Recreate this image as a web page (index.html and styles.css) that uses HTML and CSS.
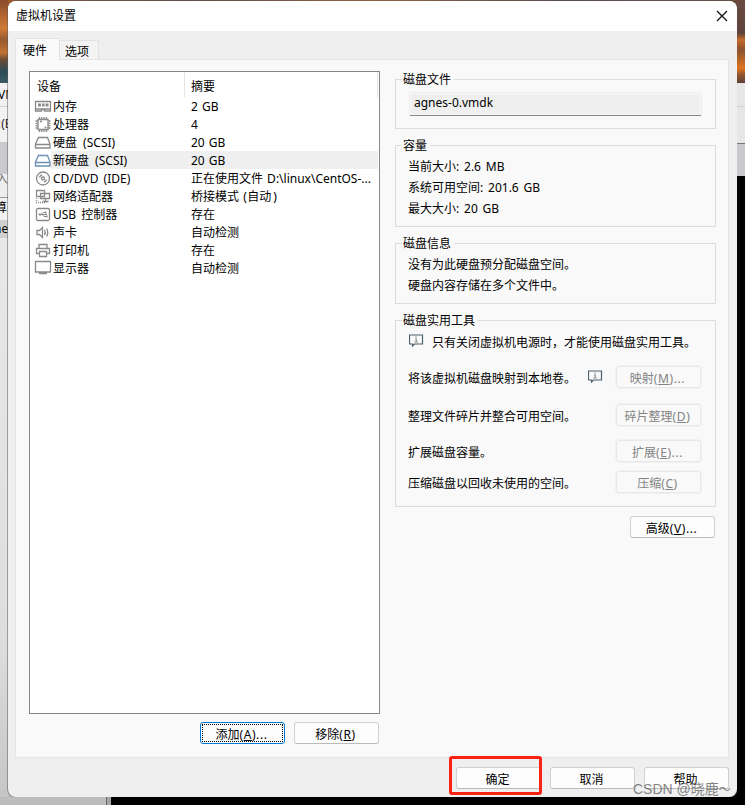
FILE: index.html
```html
<!DOCTYPE html>
<html lang="zh-CN">
<head>
<meta charset="utf-8">
<title>虚拟机设置</title>
<link rel="stylesheet" href="styles.css">
</head>
<body>
<div class="desktop">
  <aside class="strip">
    <div class="photo"></div>
    <div class="caption">VM</div>
    <div class="menu"><span>:</span>(E)</div>
    <div class="toolbar"></div>
    <div class="search">入</div>
    <div class="tree">算</div>
    <div class="tree selected">ne</div>
    <div class="fade"></div>
  </aside>

  <main class="dialog">
    <header class="titlebar">
      <span>虚拟机设置</span>
      <svg width="12" height="12" viewBox="0 0 12 12"><path d="M1 1l10 10M11 1L1 11" fill="none" stroke="#111" stroke-width="1.3"/></svg>
    </header>
    <nav class="tabs"><div class="tab active">硬件</div><div class="tab">选项</div></nav>
    <section class="panel">
      <div class="left">
        <div class="list">
          <div class="list-head"><span>设备</span><span>摘要</span></div>
          <div class="row">
            <svg viewBox="0 0 17 18"><path d="M.5 3.500h15v7.500H.5zM.5 11v2h6v-1.500h3V13h6v-2" class="ln"/><path d="M3 5.500h3v3H3zM7 5.500h2.500v3H7zM10.500 5.500h3v3h-3z" fill="#8a8a8a"/></svg>
            <span class="name">内存</span><span>2 GB</span></div>
          <div class="row">
            <svg viewBox="0 0 17 18"><path d="M3 3.500h10v10H3zM4.500 1v2m2.300-2v2m2.300-2v2m2.400-2v2m-7 11v2m2.300-2v2m2.300-2v2m2.400-2v2M.5 5h2m-2 2.300h2m-2 2.400h2m-2 2.300h2M13.500 5h2m-2 2.300h2m-2 2.400h2m-2 2.300h2M5 5.500h2m2.500 6h2" class="ln"/></svg>
            <span class="name">处理器</span><span>4</span></div>
          <div class="row">
            <svg viewBox="0 0 17 18"><path d="M3.500 3.500h9l2.500 6.500v4H.5v-4zM.5 10.500h14.500" class="ln"/></svg>
            <span class="name wide">硬盘 (SCSI)</span><span>20 GB</span></div>
          <div class="row selected">
            <svg viewBox="0 0 17 18"><path d="M3.500 3.500h9l2.500 6.500v4H.5v-4zM.5 10.500h14.500" class="ln blue"/></svg>
            <span class="name wide">新硬盘 (SCSI)</span><span>20 GB</span></div>
          <div class="row">
            <svg viewBox="0 0 17 18"><circle cx="8" cy="8.500" r="6.500" class="ln"/><circle cx="8" cy="8.500" r="1.500" class="ln"/><path d="M4.500 7.500q.5-2 2.500-2.500M11.500 9.500q-.5 2-2.500 2.500" class="ln"/></svg>
            <span class="name">CD/DVD (IDE)</span><span>正在使用文件 D:\linux\CentOS-...</span></div>
          <div class="row">
            <svg viewBox="0 0 17 18"><path d="M1.500 2.500h8v6h-8zM5.500 5.500h9v5h-9zM10.500 11v2m-3 .5h6" class="ln white"/><path d="M1.500 10v4.500h10" class="ln" stroke-dasharray="1 1"/></svg>
            <span class="name">网络适配器</span><span>桥接模式 <span class="k">(</span>自动<span class="close">)</span></span></div>
          <div class="row">
            <svg viewBox="0 0 17 18"><rect x="1.500" y="2.500" width="13" height="12" rx="1.500" class="ln"/><path d="M4 8.500h8M6 8.500l2-2h2M7 8.500l2 2h2" fill="none" stroke="#8a8a8a"/><path d="M3 8.500l2.500-1.500v3zM10 5.500h1.500v2H10zM11 9.500h1.500v2H11z" fill="#888"/></svg>
            <span class="name">USB 控制器</span><span>存在</span></div>
          <div class="row">
            <svg viewBox="0 0 17 18"><path d="M2 6.500h2.500l3-3v10l-3-3H2zM9.500 6q1.500 2.500 0 5M11.500 4.500q2.500 4 0 8" class="ln"/></svg>
            <span class="name">声卡</span><span>自动检测</span></div>
          <div class="row">
            <svg viewBox="0 0 17 18"><path d="M4 6V2.500h8V6M4 11.500H1.500v-5h13v5H12M4.500 9.500h7v5h-7z" class="ln"/></svg>
            <span class="name">打印机</span><span>存在</span></div>
          <div class="row">
            <svg viewBox="0 0 17 18"><path d="M.5 1.500h15v10.500H.5zM4 13.500h8" class="ln"/></svg>
            <span class="name">显示器</span><span>自动检测</span></div>
        </div>
        <div class="list-actions"><button class="btn focus"><span>添加<span class="k">(<u>A</u>)...</span></span></button><button class="btn"><span>移除<span class="k">(<u>R</u>)</span></span></button></div>
      </div>

      <div class="right">
        <fieldset class="file"><legend>磁盘文件</legend><div class="field">agnes-0.vmdk</div></fieldset>
        <fieldset class="capacity"><legend>容量</legend><p>当前大小: 2.6 MB</p><p>系统可用空间: 201.6 GB</p><p>最大大小: 20 GB</p></fieldset>
        <fieldset class="info"><legend>磁盘信息</legend><p>没有为此硬盘预分配磁盘空间。</p><p>硬盘内容存储在多个文件中。</p></fieldset>
        <fieldset class="tools"><legend>磁盘实用工具</legend>
          <p class="note"><svg class="tip" width="15" height="13" viewBox="0 0 15 13"><path d="M.5 1h13v9H5.500L3.500 12v-2H.5z" fill="none" stroke="#4c606d" stroke-width="1.2"/><path d="M6 2.500h2v1H6zM6 4.500h2v3h1v1H5.500v-1h1v-2H6z" fill="#98a1a7"/></svg>只有关闭虚拟机电源时，才能使用磁盘实用工具。</p>
          <div class="tool"><span>将该虚拟机磁盘映射到本地卷。</span><svg class="tip" width="15" height="13" viewBox="0 0 15 13"><path d="M.5 1h13v9H5.500L3.500 12v-2H.5z" fill="none" stroke="#4c606d" stroke-width="1.2"/><path d="M6 2.500h2v1H6zM6 4.500h2v3h1v1H5.500v-1h1v-2H6z" fill="#98a1a7"/></svg><button class="btn" disabled><span>映射<span class="k">(<u>M</u>)...</span></span></button></div>
          <div class="tool"><span>整理文件碎片并整合可用空间。</span><button class="btn" disabled><span>碎片整理<span class="k">(<u>D</u>)</span></span></button></div>
          <div class="tool"><span>扩展磁盘容量。</span><button class="btn" disabled><span>扩展<span class="k">(<u>E</u>)...</span></span></button></div>
          <div class="tool"><span>压缩磁盘以回收未使用的空间。</span><button class="btn" disabled><span>压缩<span class="k">(<u>C</u>)</span></span></button></div>
        </fieldset>
        <button class="btn advanced"><span>高级<span class="k">(<u>V</u>)...</span></span></button>
      </div>
    </section>
    <footer class="footer"><div class="ok"><button class="btn"><span>确定</span></button><div class="marker"></div></div><button class="btn"><span>取消</span></button><div class="help"><button class="btn"><span>帮助</span></button><div class="watermark">CSDN @晓鹿<small>～</small></div></div></footer>
  </main>

  <aside class="strip edge">
    <div class="photo"></div>
    <div class="caption"></div>
    <div class="menu"></div>
    <div class="toolbar"></div>
  </aside>
  <div class="below"></div>
</div>
</body>
</html>
```
FILE: styles.css
```css
* { box-sizing: border-box; }
body {
  margin: 0;
  width: 745px;
  height: 805px;
  overflow: hidden;
  font: 12px/18px "Noto Sans", "Noto Sans CJK SC", sans-serif;
  color: #000;
}
p { margin: 0; }
.desktop {
  display: grid;
  grid-template-columns: 8px 729px 8px;
  grid-template-rows: 797px 8px;
  height: 805px;
  background: linear-gradient(90deg, #a75a2a, #634138 25%, #c36a2f 50%, #59433e 75%, #704a39) 0 0 / 100% 14px no-repeat,
    linear-gradient(90deg, #bcbcbc 112px, #000 112px);
}
.strip { overflow: hidden; white-space: nowrap; background: #d6d6d6; }
.strip > div { overflow: hidden; }
.photo { height: 83px; background: linear-gradient(#8a4a2a, #b9682f 22%, #d07a34 34%, #96592f 48%, #c37232 63%, #6b4a34 72%, #2a4c58 86%, #3b5a63); }
.caption { height: 24px; line-height: 23px; background: #f2f2f2; border-bottom: 1px solid #d2d2d2; text-indent: -2px; }
.menu { height: 35px; line-height: 33px; background: #f2f2f2; text-indent: -2px; color: #222; }
.menu span { color: #c98035; }
.toolbar { height: 32px; background: #cacace; }
.search { height: 24px; line-height: 10px; background: #eee; border-bottom: 1px solid #999; text-indent: -4px; color: #777; }
.tree { height: 22px; line-height: 20px; background: #f2f2f2; text-indent: -5px; }
.tree.selected { height: 18px; line-height: 18px; background: #d0d0d0; text-indent: -6px; }
.fade { height: 570px; background: linear-gradient(#e8e8e8, #dedede 70%, #c4c4c4); }
.edge { background: #000; }
.edge .photo { background: linear-gradient(#6b4a42, #5d443c 40%, #c56a2a 48%, #8a5230 60%, #dd751f 82%, #95552f 90%, #5c4138); }
.edge .caption, .edge .menu { background: #e6e6e6; }
.edge .menu { height: 37px; border-bottom: 1px solid #777; }
.below { grid-column: 1 / -1; background: linear-gradient(90deg, #bdbdbd 106px, #666 106px 107px, #a5a5a5 107px 111px, #000 111px); }

.dialog {
  margin-top: 1px;
  background: #efefef;
  border-radius: 8px;
  box-shadow: 0 0 0 1px rgba(90, 90, 90, .5);
}
.titlebar {
  display: flex;
  justify-content: space-between;
  align-items: center;
  height: 30px;
  padding: 0 9px 0 8px;
  background: #fff;
  border-radius: 8px 8px 0 0;
}
.titlebar svg { margin-top: -1px; }
.tabs { display: flex; align-items: flex-end; height: 28px; padding-left: 7px; position: relative; }
.tab { width: 39px; height: 19px; padding-left: 5px; line-height: 21px; border: 1px solid #e3e3e3; border-width: 1px 1px 0 0; background: #f3f3f3; }
.tab.active { width: 45px; height: 22px; margin-bottom: -1px; padding-left: 7px; line-height: 23px; border-width: 1px 1px 0 1px; background: #f9f9f9; }
.panel { display: flex; width: 714px; height: 699px; margin-left: 7px; background: #f9f9f9; border: 1px solid #e5e5e5; }
.left { width: 351px; margin: 11px 0 0 13px; }
.list { height: 643px; border: 1px solid #828790; background: #fff; }
.list-head { display: flex; height: 25px; margin-right: 1px; border-right: 1px solid #e5e5e5; line-height: 30px; }
.list-head span { padding-left: 6px; }
.list-head span:first-child { width: 155px; padding-left: 7px; border-right: 1px solid #e5e5e5; }
.row { display: flex; height: 18px; line-height: 20px; white-space: pre; padding-left: 5px; margin-right: 1px; word-spacing: 1px; }
.row svg { width: 17px; height: 18px; margin-top: 1px; flex: none; overflow: visible; }
.row .name { width: 139px; padding-left: 1px; word-spacing: 2px; }
.row .wide { word-spacing: 3px; }
.row .close { margin-left: 2px; }
.row.selected { background: linear-gradient(90deg, #fff 21px, #efefef 21px); }
.ln { fill: none; stroke: #8a8a8a; stroke-width: 1.3; }
.ln.blue { stroke: #6c91b3; fill: #fff; }
.ln.white { fill: #fff; }
.list-actions { display: flex; justify-content: flex-end; gap: 9px; padding: 8px 1px 0 0; }
.btn {
  position: relative;
  flex: none;
  width: 85px;
  height: 22px;
  padding: 0;
  border: 1px solid #d0d0d0;
  border-bottom-color: #bbb;
  border-radius: 3px;
  background: #fdfdfd;
  font: inherit;
  line-height: 20px;
  color: #000;
}
.btn > span { display: block; padding-top: 2px; padding-right: 2px; height: 20px; }
.btn:disabled { color: #838383; border-color: #e8e8e8; background: #f9f9f9; outline: 1px solid #f1f1f1; }
.btn u { text-underline-offset: 1px; }
.btn.focus { border-color: #0078d4; }
.btn.focus > span { margin: 1px; height: 18px; padding-top: 0; line-height: 20px; border: 1px dotted #000; }
.k { letter-spacing: .6px; }

.right { width: 321px; margin: 18px 0 0 15px; }
fieldset {
  min-width: 0;
  margin: 0;
  padding: 0 13px 0 12px;
  border: 1px solid #dcdcdc;
}
legend { height: 18px; margin-left: -6px; padding: 0 3px 0 1px; line-height: 20px; }
.file { height: 59px; margin-top: -8px; }
.field { width: 293px; height: 24px; margin: 4px 0 0 1px; padding-left: 4px; line-height: 20px; background: #efefef; border: 1px solid #ececec; border-bottom-color: #858585; box-shadow: inset 0 0 0 1px #f8f8f8; border-radius: 2px; }
.capacity { height: 91px; margin-top: 7px; word-spacing: 1.7px; }
.capacity p, .info p { height: 21px; line-height: 21px; }
.capacity legend + p, .info legend + p { margin-top: 2px; }
.info { height: 70px; margin-top: 7px; }
.tools { height: 196px; margin-top: 7px; }
.note { display: flex; height: 20px; line-height: 28px; white-space: nowrap; }
.note .tip { margin: 5px 8px 0 1px; flex: none; }
.tool { display: flex; align-items: center; height: 22px; width: 293px; }
.note + .tool { margin-top: 17px; }
.tool > span { flex: 1; padding-top: 3px; }
.tool .tip { margin: -1px 13px 0 0; }
.tool:nth-of-type(2) { margin-top: 16px; }
.tool:nth-of-type(3) { margin-top: 14px; }
.tool:nth-of-type(4) { margin-top: 9px; }
.advanced { display: block; margin: 9px 1px 0 auto; }
.footer { display: flex; justify-content: flex-end; gap: 9px; padding: 9px 8px 0 0; }
.ok, .help { position: relative; height: 22px; }
.marker { position: absolute; left: -7px; top: -11px; width: 93px; height: 39px; border: 3px solid #fb2214; border-radius: 3px; }
.watermark { position: absolute; left: -11px; top: 12px; font: 14px/20px "Liberation Sans", "Noto Sans CJK SC", sans-serif; color: rgba(90, 90, 90, .75); white-space: nowrap; }
.watermark small { font-size: 12px; }
```
